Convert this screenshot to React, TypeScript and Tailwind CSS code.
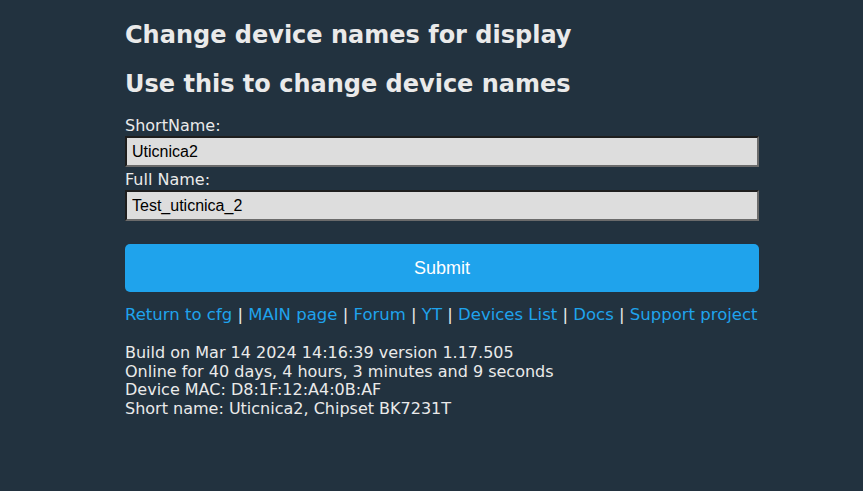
import React from "react";

const links = ["Return to cfg", "MAIN page", "Forum", "YT", "Devices List", "Docs", "Support project"];

export default function App() {
  return (
    <div className="min-h-screen w-full bg-[#22323f] text-[#eaeaea] pl-[125px] pt-[20px]" style={{ fontFamily: '"DejaVu Sans", Verdana, sans-serif' }}>
      <div className="w-[634px]">
        <h2 className="text-[24px] leading-[30px] font-bold m-0">Change device names for display</h2>
        <h2 className="text-[24px] leading-[30px] font-bold mt-[19px]">Use this to change device names</h2>
        <form className="mt-[17px]" onSubmit={(e) => e.preventDefault()}>
          <label className="block text-[16px] leading-[20px]">ShortName:</label>
          <input
            defaultValue="Uticnica2"
            className="block w-full h-[31px] bg-[#dddddd] text-black text-[16px] px-[5px] border-2 border-t-[#1e1e1e] border-l-[#1e1e1e] border-b-[#6b6b6b] border-r-[#6b6b6b] outline-none"
            style={{ fontFamily: '"Liberation Sans", Arial, sans-serif' }}
          />
          <label className="block text-[16px] leading-[20px] mt-[3px]">Full Name:</label>
          <input
            defaultValue="Test_uticnica_2"
            className="block w-full h-[31px] bg-[#dddddd] text-black text-[16px] px-[5px] border-2 border-t-[#1e1e1e] border-l-[#1e1e1e] border-b-[#6b6b6b] border-r-[#6b6b6b] outline-none"
            style={{ fontFamily: '"Liberation Sans", Arial, sans-serif' }}
          />
          <button
            type="submit"
            className="block w-full h-[48px] mt-[23px] rounded-[5px] bg-[#1fa3ec] text-white text-[18px]"
            style={{ fontFamily: '"Liberation Sans", Arial, sans-serif' }}
          >
            Submit
          </button>
        </form>
        <div className="mt-[13px] text-[16.5px] leading-[20px] whitespace-nowrap">
          {links.map((l, i) => (
            <React.Fragment key={l}>
              {i > 0 && <span> | </span>}
              <a href="#" className="text-[#1fa3ec] no-underline">{l}</a>
            </React.Fragment>
          ))}
        </div>
        <div className="mt-[19px] text-[16px] leading-[18.7px]">
          <div>Build on Mar 14 2024 14:16:39 version 1.17.505</div>
          <div>Online for 40 days, 4 hours, 3 minutes and 9 seconds</div>
          <div>Device MAC: D8:1F:12:A4:0B:AF</div>
          <div>Short name: Uticnica2, Chipset BK7231T</div>
        </div>
      </div>
    </div>
  );
}
